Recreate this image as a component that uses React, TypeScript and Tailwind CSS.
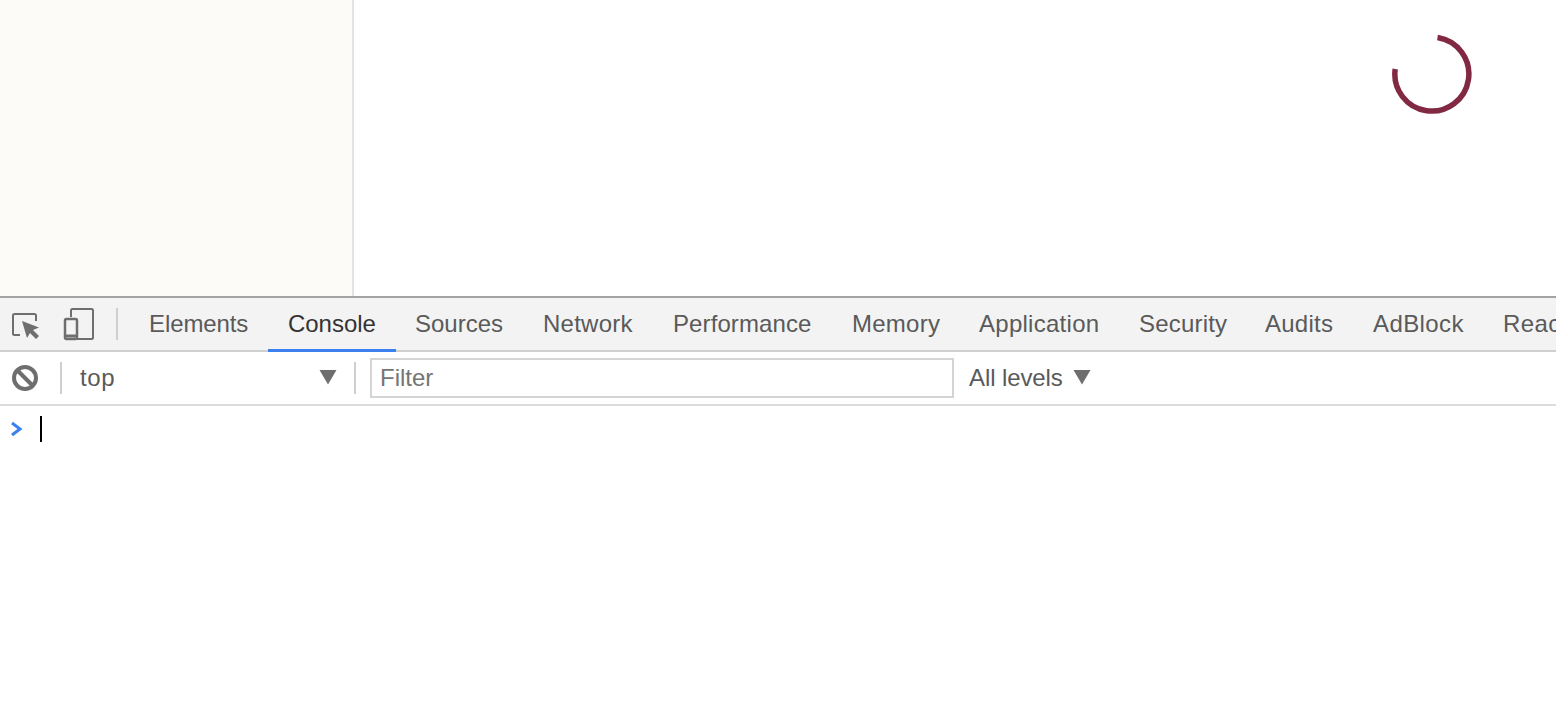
const tabs = [
  { name: "Elements", cls: "w-[139px] tracking-[-0.1px]" },
  { name: "Console", cls: "w-[128px] tracking-[-0.03px]" },
  { name: "Sources", cls: "w-[128px] -ml-[1px] pl-[20px]" },
  { name: "Network", cls: "w-[130px] tracking-[0.25px]" },
  { name: "Performance", cls: "w-[179px] tracking-[0.1px]" },
  { name: "Memory", cls: "w-[127px] tracking-[0.25px]" },
  { name: "Application", cls: "w-[160px] tracking-[0.27px]" },
  { name: "Security", cls: "w-[126px] tracking-[0.2px]" },
  { name: "Audits", cls: "w-[108px] tracking-[0.25px]" },
  { name: "AdBlock", cls: "w-[130px] tracking-[0.4px]" },
  { name: "React", cls: "w-[90px] tracking-[0.4px]" },
];

const Triangle = () => (
  <svg width="18" height="16" viewBox="0 0 18 16" className="-mt-[2px]">
    <path d="M0.500 1h17L9 15.500z" fill="#6e6e6e" />
  </svg>
);

const App = () => {
  return (
    <div className="h-[704px] w-[1556px] overflow-hidden bg-white font-['Liberation_Sans',sans-serif]">
      {/* page behind devtools */}
      <div className="flex h-[296px]">
        <div className="w-[354px] border-r-2 border-[#e4e4e2] bg-[#fcfbf7]" />
        <div className="flex flex-1 justify-end pt-[34px] pr-[84px]">
          <svg width="80" height="80" viewBox="0 0 80 80">
            <path d="M45.500 3.500A37 37 0 1 1 3.200 35" fill="none" stroke="#812842" strokeWidth="5.500" />
          </svg>
        </div>
      </div>

      {/* tab bar */}
      <div className="flex h-[56px] items-stretch border-t-2 border-b-2 border-t-[#a3a3a3] border-b-[#cfcfcf] bg-[#f3f3f3]">
        <div className="flex w-[129px] shrink-0 items-center pl-[11px]">
          <svg width="28" height="28" viewBox="0 0 28 28" fill="none" className="mt-[2px]">
            <path d="M9 24H3.500A1.500 1.500 0 0 1 2 22.500V4.500A1.500 1.500 0 0 1 3.500 3h20A1.500 1.500 0 0 1 25 4.500V10" stroke="#6e6e6e" strokeWidth="2" />
            <path d="M11 10l17 6.500-6 2.500 6 6-3 3-6-6-3 5z" fill="#6e6e6e" />
          </svg>
          <svg width="32" height="34" viewBox="0 0 32 34" fill="none" className="ml-[24px]">
            <path d="M8 10V3.500A1.500 1.500 0 0 1 9.500 2h19A1.500 1.500 0 0 1 30 3.500v27A1.500 1.500 0 0 1 28.500 32H14" stroke="#6e6e6e" strokeWidth="2" />
            <rect x="2" y="12" width="12" height="20" rx="1.500" stroke="#6e6e6e" strokeWidth="2.500" />
            <path d="M2 29h12" stroke="#6e6e6e" strokeWidth="3" />
          </svg>
          <div className="ml-[21px] h-[32px] w-[2px] bg-[#cfcfcf]" />
        </div>
        {tabs.map((t) => (
          <div
            key={t.name}
            className={`relative flex shrink-0 items-center pb-[1px] pl-[20px] text-[24px] ${t.cls} ${t.name === "Console" ? "text-[#333333]" : "text-[#5a5a5a]"}`}
          >
            {t.name}
            {t.name === "Console" && <div className="absolute right-0 -bottom-[2px] left-0 h-[3px] bg-[#3b80ee]" />}
          </div>
        ))}
      </div>

      {/* console toolbar */}
      <div className="flex h-[54px] items-center border-b-2 border-[#dcdcdc] text-[24px] text-[#5a5a5a]">
        <svg width="28" height="28" viewBox="0 0 28 28" fill="none" className="ml-[11px]">
          <circle cx="14" cy="14" r="11" stroke="#6e6e6e" strokeWidth="4" />
          <path d="M6 6l16 16" stroke="#6e6e6e" strokeWidth="4" />
        </svg>
        <div className="ml-[21px] h-[32px] w-[2px] bg-[#cfcfcf]" />
        <div className="flex w-[292px] items-center justify-between pr-[17px] pl-[18px]">
          <span className="tracking-[0.6px]">top</span>
          <Triangle />
        </div>
        <div className="h-[32px] w-[2px] bg-[#cfcfcf]" />
        <div className="ml-[14px] flex h-[40px] w-[584px] items-center border-2 border-[#d4d4d4] pl-[8px] text-[#757575]">Filter</div>
        <span className="ml-[15px] tracking-[-0.1px]">All levels</span>
        <div className="ml-[10px] flex">
          <Triangle />
        </div>
      </div>

      {/* prompt */}
      <div className="flex items-center pt-[10px] pl-[10px]">
        <svg width="14" height="16" viewBox="0 0 14 16" fill="none">
          <path d="M2 2l8 6-8 6" stroke="#3b80ee" strokeWidth="3" />
        </svg>
        <div className="ml-[16px] h-[26px] w-[2px] bg-black" />
      </div>
    </div>
  );
};

export default App;
